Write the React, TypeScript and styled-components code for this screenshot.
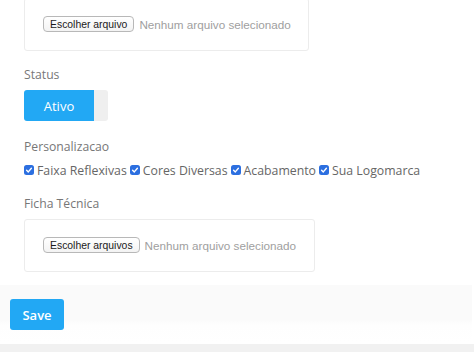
import React from "react";
import styled, { createGlobalStyle } from "styled-components";

const Global = createGlobalStyle`
  html, body { margin: 0; padding: 0; background: #fff; }
  body { font-family: "Open Sans", "Noto Sans", sans-serif; overflow: hidden; }
`;

const Page = styled.div`
  width: 474px;
  height: 353px;
  overflow: hidden;
  display: flex;
  flex-direction: column;
`;

const Content = styled.div`
  padding-left: 24px;
  display: flex;
  flex-direction: column;
`;

const FileBox = styled.div<{ $width: number; $mt: number }>`
  width: ${(p) => p.$width}px;
  box-sizing: border-box;
  border: 1px solid #ececec;
  border-radius: 3px;
  padding: 17px 18px 18px;
  margin-top: ${(p) => p.$mt}px;
  display: flex;
  align-items: center;
  gap: 5px;
`;

const FileButton = styled.span`
  display: inline-flex;
  align-items: center;
  height: 16px;
  box-sizing: border-box;
  padding: 0 6px;
  border: 1px solid #b8b8b8;
  border-radius: 4px;
  background: linear-gradient(#ffffff, #f3f3f3);
  font-family: "Liberation Sans", Arial, sans-serif;
  font-size: 10.4px;
  color: #1a1a1a;
  white-space: nowrap;
`;

const FileText = styled.span`
  font-family: "Liberation Sans", Arial, sans-serif;
  font-size: 11.7px;
  color: #a0a0a0;
  white-space: nowrap;
`;

const Label = styled.div<{ $mt: number }>`
  margin-top: ${(p) => p.$mt}px;
  font-size: 12.2px;
  line-height: 18px;
  color: #777;
`;

const Toggle = styled.div`
  margin-top: 6px;
  display: flex;
  width: 84px;
  height: 31px;
  border-radius: 3px;
  overflow: hidden;
`;

const ToggleOn = styled.div`
  width: 70px;
  background: #22a8f4;
  color: #fff;
  font-size: 13px;
  display: flex;
  align-items: center;
  justify-content: center;
`;

const ToggleOff = styled.div`
  flex: 1;
  background: #efefef;
`;

const CheckRow = styled.div`
  margin-top: 5px;
  display: flex;
  align-items: center;
  height: 18px;
  gap: 3px;
`;

const CheckItem = styled.label`
  display: inline-flex;
  align-items: center;
  gap: 3px;
  font-size: 12.3px;
  color: #666;
  white-space: nowrap;
`;

const Box = styled.span`
  width: 10px;
  height: 10px;
  border-radius: 2.5px;
  background: #2c6fe0;
  display: inline-flex;
  align-items: center;
  justify-content: center;
`;

const Check = () => (
  <Box>
    <svg width="8" height="8" viewBox="0 0 8 8">
      <path d="M1.6 4.2 L3.3 5.9 L6.4 2.2" fill="none" stroke="#fff" strokeWidth="1.4" strokeLinecap="round" strokeLinejoin="round" />
    </svg>
  </Box>
);

const Footer = styled.div`
  margin-top: 13px;
  width: 472px;
  height: 59px;
  box-sizing: border-box;
  padding: 14px 10px 0;
  background: linear-gradient(#fafafa 0, #fafafa 34px, #fefefe 40px, #fff 100%);
`;

const SaveButton = styled.button`
  width: 54px;
  height: 31px;
  border: none;
  border-radius: 3px;
  background: #22a8f4;
  color: #fff;
  font-family: "Open Sans", sans-serif;
  font-size: 13px;
  font-weight: 600;
  padding: 0;
`;

const BottomStrip = styled.div`
  height: 8px;
  background: #f1f1f1;
`;

const items = ["Faixa Reflexivas", "Cores Diversas", "Acabamento", "Sua Logomarca"];

export default function App() {
  return (
    <Page>
      <Global />
      <Content>
        <FileBox $width={285} $mt={-2}>
          <FileButton>Escolher arquivo</FileButton>
          <FileText>Nenhum arquivo selecionado</FileText>
        </FileBox>
        <Label $mt={15}>Status</Label>
        <Toggle>
          <ToggleOn>Ativo</ToggleOn>
          <ToggleOff />
        </Toggle>
        <Label $mt={17}>Personalizacao</Label>
        <CheckRow>
          {items.map((t) => (
            <CheckItem key={t}>
              <Check />
              {t}
            </CheckItem>
          ))}
        </CheckRow>
        <Label $mt={16}>Ficha Técnica</Label>
        <FileBox $width={291} $mt={6}>
          <FileButton>Escolher arquivos</FileButton>
          <FileText>Nenhum arquivo selecionado</FileText>
        </FileBox>
      </Content>
      <Footer>
        <SaveButton>Save</SaveButton>
      </Footer>
      <BottomStrip />
    </Page>
  );
}
